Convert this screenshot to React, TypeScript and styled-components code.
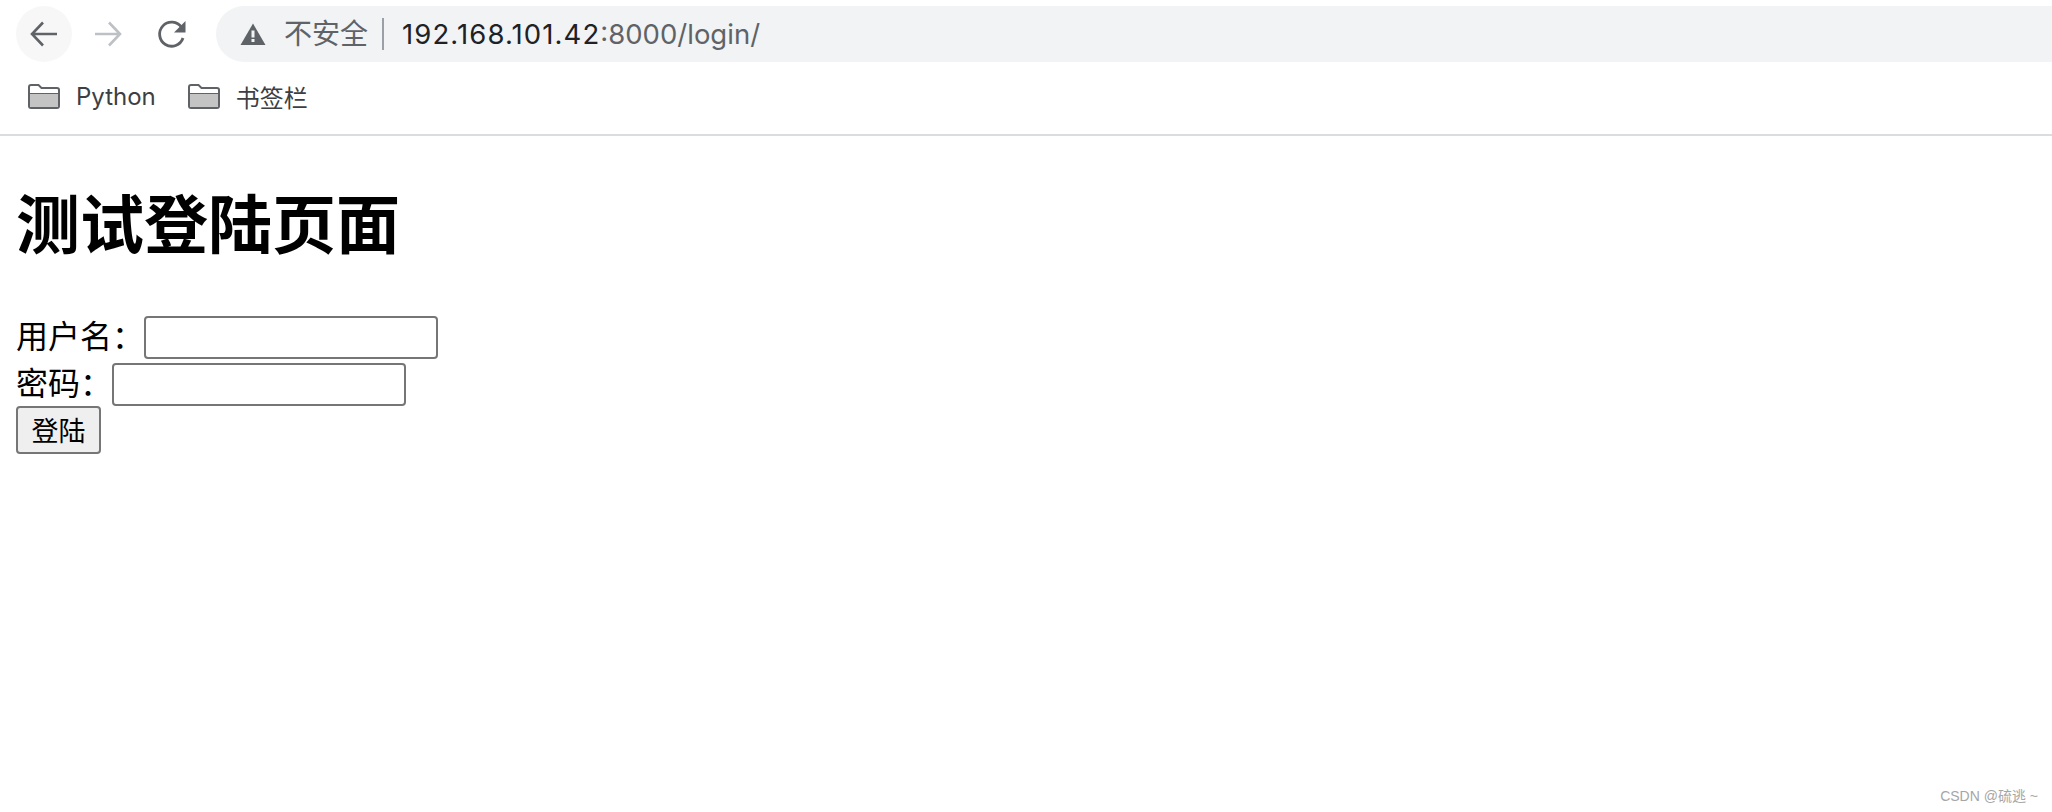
import React from "react";
import styled, { createGlobalStyle } from "styled-components";

const GlobalStyle = createGlobalStyle`
  html, body {
    margin: 0;
    padding: 0;
    background: #fff;
  }
  body {
    font-family: "Liberation Sans", "Noto Sans CJK SC", sans-serif;
    overflow: hidden;
  }
`;

const Page = styled.div`
  position: relative;
  height: 812px;
  overflow: hidden;
`;

const Chrome = styled.header`
  height: 134px;
  border-bottom: 2px solid #dadce0;
  font-family: Inter, "Noto Sans CJK SC", sans-serif;
`;

const Toolbar = styled.div`
  display: flex;
  align-items: center;
  height: 56px;
  padding: 6px 0 0 16px;
`;

const NavButton = styled.div<{ $active?: boolean }>`
  width: 56px;
  height: 56px;
  margin-right: 8px;
  flex: none;
  display: flex;
  align-items: center;
  justify-content: center;
  border-radius: 50%;
  background: ${(p) => (p.$active ? "#f7f7f7" : "transparent")};
`;

const AddressBar = styled.div`
  flex: 1;
  height: 56px;
  margin-left: 8px;
  display: flex;
  align-items: center;
  padding-left: 24px;
  border-radius: 28px 0 0 28px;
  background: #f1f3f4;
`;

const Insecure = styled.span`
  margin-left: 18px;
  padding-right: 14px;
  border-right: 2px solid #9aa0a6;
  font-size: 28px;
  line-height: 32px;
  color: #5f6368;
`;

const Url = styled.span`
  margin-left: 18px;
  font-size: 27.5px;
  color: #5f6368;
`;

const Host = styled.span`
  color: #202124;
  letter-spacing: 1.1px;
`;

const Bookmarks = styled.nav`
  display: flex;
  align-items: center;
  gap: 32px;
  height: 60px;
  padding: 8px 0 0 28px;
  box-sizing: border-box;
`;

const Bookmark = styled.div`
  display: flex;
  align-items: center;
  gap: 16px;
  font-size: 24px;
  color: #3c4043;
`;

const Content = styled.main`
  padding: 0 16px;
`;

const Title = styled.h1`
  margin: 0;
  padding: 54px 0;
  font-size: 64px;
  line-height: 72px;
  font-weight: 700;
  color: #000;
`;

const LoginForm = styled.form`
  display: flex;
  flex-direction: column;
  align-items: flex-start;
`;

const Row = styled.label`
  display: flex;
  align-items: center;
  height: 43px;
  font-size: 32px;
  color: #000;

  & + & {
    margin-top: 4px;
  }
`;

const FieldLabel = styled.span`
  margin-bottom: 8px;
`;

const Field = styled.input`
  width: 294px;
  height: 43px;
  padding: 0 6px;
  box-sizing: border-box;
  border: 2px solid #767676;
  border-radius: 4px;
  background: #fff;
  outline: none;
`;

const Submit = styled.button`
  width: 85px;
  height: 48px;
  padding: 0 0 2px;
  box-sizing: border-box;
  border: 2px solid #767676;
  border-radius: 4px;
  background: #efefef;
  color: #000;
  font-family: inherit;
  font-size: 27px;
`;

const Watermark = styled.div`
  position: absolute;
  right: 14px;
  bottom: 7px;
  font-size: 14px;
  line-height: 18px;
  color: #a6a6a6;
`;

function FolderIcon() {
  return (
    <svg width="32" height="26" viewBox="0 0 32 26">
      <path
        d="M1 4a2 2 0 0 1 2-2h7.5l3 3H29a2 2 0 0 1 2 2v16a2 2 0 0 1-2 2H3a2 2 0 0 1-2-2z"
        fill="#fff"
        stroke="#5f6368"
        strokeWidth="2"
      />
      <path d="M2 11h28v12a1 1 0 0 1-1 1H3a1 1 0 0 1-1-1z" fill="#c4c4c4" />
      <path d="M2 10.5h28" stroke="#5f6368" strokeWidth="1" />
    </svg>
  );
}

export default function App() {
  return (
    <Page>
      <GlobalStyle />
      <Chrome>
        <Toolbar>
          <NavButton $active>
            <svg width="30" height="30" viewBox="0 0 30 30" fill="none" stroke="#5f6368" strokeWidth="2.6">
              <path d="M28 15H3M14 3.5 3 15l11 11.5" />
            </svg>
          </NavButton>
          <NavButton>
            <svg width="30" height="30" viewBox="0 0 30 30" fill="none" stroke="#bdc1c6" strokeWidth="2.6">
              <path d="M2 15h25M16 3.5 27 15 16 26.5" />
            </svg>
          </NavButton>
          <NavButton>
            <svg width="32" height="32" viewBox="0 0 32 32" fill="none">
              <path d="M27 20a12 12 0 1 1-1.4-10.5" stroke="#5f6368" strokeWidth="2.8" />
              <path d="M29.5 3v11.5H18z" fill="#5f6368" />
            </svg>
          </NavButton>
          <AddressBar>
            <svg width="26" height="24" viewBox="0 0 26 24">
              <path d="M13 1.5 25.5 23H.5z" fill="#5f6368" />
              <path d="M11.5 8.5h3v7h-3zM11.5 17h3v3h-3z" fill="#f1f3f4" />
            </svg>
            <Insecure>不安全</Insecure>
            <Url>
              <Host>192.168.101.42</Host>:8000/login/
            </Url>
          </AddressBar>
        </Toolbar>
        <Bookmarks>
          <Bookmark>
            <FolderIcon />
            Python
          </Bookmark>
          <Bookmark>
            <FolderIcon />
            书签栏
          </Bookmark>
        </Bookmarks>
      </Chrome>
      <Content>
        <Title>测试登陆页面</Title>
        <LoginForm onSubmit={(e) => e.preventDefault()}>
          <Row>
            <FieldLabel>用户名：</FieldLabel>
            <Field type="text" />
          </Row>
          <Row>
            <FieldLabel>密码：</FieldLabel>
            <Field type="password" />
          </Row>
          <Submit type="submit">登陆</Submit>
        </LoginForm>
      </Content>
      <Watermark>CSDN @硫逃 ~</Watermark>
    </Page>
  );
}
